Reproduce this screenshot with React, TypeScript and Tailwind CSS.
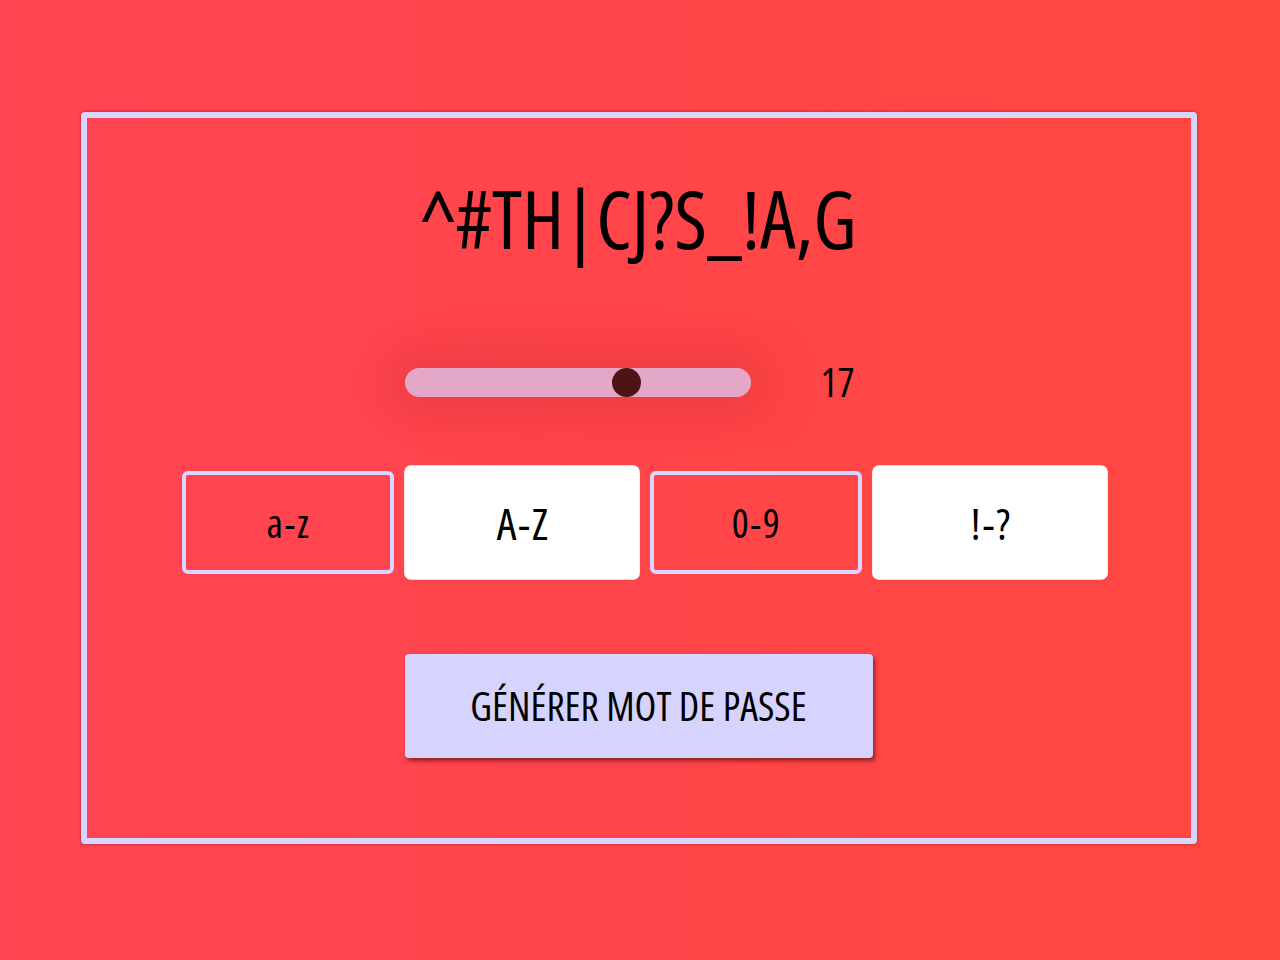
import { useState } from "react";

const options = [
  { id: "lower", label: "a-z" },
  { id: "upper", label: "A-Z" },
  { id: "digits", label: "0-9" },
  { id: "symbols", label: "!-?" },
];

export default function App() {
  const [length, setLength] = useState(17);
  const [active, setActive] = useState<Record<string, boolean>>({
    lower: false,
    upper: true,
    digits: false,
    symbols: true,
  });

  return (
    <div className="flex h-[960px] w-full items-start justify-center bg-gradient-to-r from-[#ff4453] to-[#ff473f] pt-[112px] font-['Open_Sans',sans-serif] [font-stretch:75%]">
      <div className="-ml-[3px] flex h-[732px] w-[1116px] flex-col items-center rounded-[4px] border-[6px] border-[#d8d5ff] pt-[50px] shadow-[0_0_3px_rgba(80,0,0,0.5)]">
        <h1 className="text-[80px] leading-[100px] text-black">^#TH|CJ?S_!A,G</h1>

        <div className="mt-[84px] flex items-center gap-[70px]">
          <div className="rounded-full shadow-[0_0_50px_22px_rgba(170,20,35,0.18)]">
            <input
              type="range"
              min={0}
              max={26}
              value={length}
              onChange={(event) => setLength(Number(event.target.value))}
              className="block h-[29px] w-[346px] cursor-pointer appearance-none rounded-full bg-[#e3a8c8] [&::-webkit-slider-thumb]:h-[29px] [&::-webkit-slider-thumb]:w-[29px] [&::-webkit-slider-thumb]:appearance-none [&::-webkit-slider-thumb]:rounded-full [&::-webkit-slider-thumb]:bg-[#4d1316]"
            />
          </div>
          <span className="w-[52px] text-[40px] text-black">{length}</span>
        </div>

        <div className="mt-[59px] flex items-center gap-[22px]">
          {options.map((option) => (
            <button
              key={option.id}
              onClick={() => setActive({ ...active, [option.id]: !active[option.id] })}
              className={
                active[option.id]
                  ? "flex h-[103px] w-[212px] scale-[1.112] items-center justify-center rounded-[6px] bg-white pl-[2px] text-[40px] tracking-[1.5px] text-black"
                  : "flex h-[103px] w-[212px] items-center justify-center rounded-[6px] border-4 border-[#d8d5ff] pl-[2px] text-[40px] tracking-[1.5px] text-black"
              }
            >
              {option.label}
            </button>
          ))}
        </div>

        <button className="mt-[80px] h-[104px] w-[468px] rounded-[4px] bg-[#d6d3ff] text-[40px] text-black uppercase shadow-[2px_3px_4px_rgba(60,0,0,0.55)]">
          Générer mot de passe
        </button>
      </div>
    </div>
  );
}
